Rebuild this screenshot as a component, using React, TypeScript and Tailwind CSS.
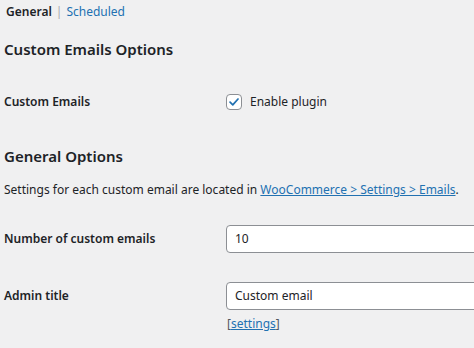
export default function App() {
  return (
    <div className="min-h-[348px] w-[474px] overflow-hidden bg-[#f0f0f1] text-[12px] text-[#1d2327] font-['Noto_Sans',sans-serif]">
      {/* Sub tabs */}
      <div className="flex items-center h-6 pl-[6px]">
        <span className="font-semibold">General</span>
        <span className="mx-[4px] text-[#a7aaad]">|</span>
        <a className="text-[#2271b1]">Scheduled</a>
      </div>

      <h2 className="mt-[13px] pl-[4px] text-[15px] font-semibold leading-6">Custom Emails Options</h2>

      <div className="flex items-center mt-[29px] h-6">
        <div className="w-[226px] shrink-0 pl-[4px] font-semibold">Custom Emails</div>
        <label className="flex items-center gap-[8px]">
          <span className="flex h-[16px] w-[16px] items-center justify-center rounded-[4px] border border-[#8c8f94] bg-white">
            <svg viewBox="0 0 16 16" className="h-[14px] w-[14px]">
              <path d="M3.5 8.2 6.6 11.2 12.6 4.6" fill="none" stroke="#2271b1" strokeWidth="2" strokeLinecap="round" strokeLinejoin="round" />
            </svg>
          </span>
          <span>Enable plugin</span>
        </label>
      </div>

      <h2 className="mt-[30px] pl-[4px] text-[15px] font-semibold leading-6">General Options</h2>

      <p className="mt-[10px] pl-[4px] leading-6 whitespace-nowrap">
        Settings for each custom email are located in{" "}
        <a className="text-[#2271b1] underline">WooCommerce &gt; Settings &gt; Emails</a>.
      </p>

      <div className="flex items-center mt-[23px]">
        <div className="w-[226px] shrink-0 pl-[4px] font-semibold">Number of custom emails</div>
        <div className="flex h-[28px] w-[260px] shrink-0 items-center rounded-[4px] border border-[#8c8f94] bg-white pl-[8px]">
          10
        </div>
      </div>

      <div className="flex items-center mt-[29px]">
        <div className="w-[226px] shrink-0 pl-[4px] font-semibold">Admin title</div>
        <div className="flex h-[28px] w-[260px] shrink-0 items-center rounded-[4px] border border-[#8c8f94] bg-white pl-[8px]">
          Custom email
        </div>
      </div>

      <div className="mt-[4px] pl-[227px] leading-5 text-[#50575e]">
        [<a className="text-[#2271b1] underline">settings</a>]
      </div>
    </div>
  );
}
